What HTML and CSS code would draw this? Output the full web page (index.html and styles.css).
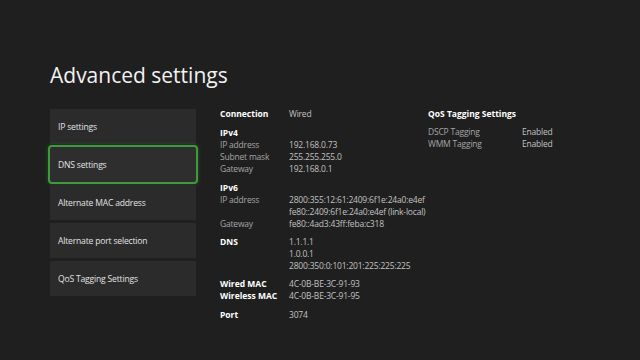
FILE: index.html
```html
<!DOCTYPE html>
<html lang="en">
<head>
    <meta charset="UTF-8">
    <meta name="viewport" content="width=device-width, initial-scale=1.0">
    <title>Advanced settings</title>
    <link rel="stylesheet" href="styles.css">
</head>
<body>
    <div class="page">
        <h1>Advanced settings</h1>
        <div class="content">
            <ul class="menu">
                <li class="menu-item">IP settings</li>
                <li class="menu-item active">DNS settings</li>
                <li class="menu-item">Alternate MAC address</li>
                <li class="menu-item">Alternate port selection</li>
                <li class="menu-item">QoS Tagging Settings</li>
            </ul>

            <div class="details">
                <div class="group">
                    <div class="row"><span class="key head">Connection</span><span class="val">Wired</span></div>
                </div>
                <div class="group">
                    <div class="row title"><span class="key head">IPv4</span></div>
                    <div class="row"><span class="key">IP address</span><span class="val">192.168.0.73</span></div>
                    <div class="row"><span class="key">Subnet mask</span><span class="val">255.255.255.0</span></div>
                    <div class="row"><span class="key">Gateway</span><span class="val">192.168.0.1</span></div>
                </div>
                <div class="group">
                    <div class="row title"><span class="key head">IPv6</span></div>
                    <div class="row"><span class="key">IP address</span><span class="val">2800:355:12:61:2409:6f1e:24a0:e4ef</span></div>
                    <div class="row"><span class="key"></span><span class="val">fe80::2409:6f1e:24a0:e4ef (link-local)</span></div>
                    <div class="row"><span class="key">Gateway</span><span class="val">fe80::4ad3:43ff:feba:c318</span></div>
                </div>
                <div class="group">
                    <div class="row"><span class="key head">DNS</span><span class="val">1.1.1.1</span></div>
                    <div class="row"><span class="key"></span><span class="val">1.0.0.1</span></div>
                    <div class="row"><span class="key"></span><span class="val">2800:350:0:101:201:225:225:225</span></div>
                </div>
                <div class="group wide-gap">
                    <div class="row"><span class="key head">Wired MAC</span><span class="val">4C-0B-BE-3C-91-93</span></div>
                    <div class="row"><span class="key head">Wireless MAC</span><span class="val">4C-0B-BE-3C-91-95</span></div>
                </div>
                <div class="group">
                    <div class="row"><span class="key head">Port</span><span class="val">3074</span></div>
                </div>
            </div>

            <div class="qos">
                <div class="group">
                    <div class="row"><span class="key head">QoS Tagging Settings</span></div>
                </div>
                <div class="group">
                    <div class="row"><span class="key wide">DSCP Tagging</span><span class="val">Enabled</span></div>
                    <div class="row"><span class="key wide">WMM Tagging</span><span class="val">Enabled</span></div>
                </div>
            </div>
        </div>
    </div>
</body>
</html>
```

FILE: styles.css
```css
body {
    margin: 0;
    background-color: #1f1f1f;
    font-family: "Open Sans", "Noto Sans", sans-serif;
    color: #e6e6e6;
    width: 640px;
    height: 360px;
    overflow: hidden;
}

.page {
    padding: 61px 0 0 50px;
}

h1 {
    margin: 0;
    font-size: 21px;
    font-weight: 400;
    line-height: 28px;
    color: #f2f2f2;
}

.content {
    display: flex;
    margin-top: 19px;
}

.menu {
    list-style: none;
    margin: 1px 0 0;
    padding: 0;
    width: 146px;
    display: flex;
    flex-direction: column;
    gap: 3px;
}

.menu-item {
    height: 35px;
    display: flex;
    align-items: center;
    padding-left: 8px;
    background-color: #2b2b2b;
    font-size: 8.6px;
    letter-spacing: -0.2px;
    color: #e2e2e2;
}

.menu-item.active {
    background-color: #2e2e2e;
    outline: 2px solid #3f9a3f;
    box-shadow: 0 0 4px 2px rgba(60, 170, 60, 0.35);
    border-radius: 2px;
}

.details {
    margin-left: 24px;
    width: 208px;
}

.group {
    margin-bottom: 6px;
}

.group.wide-gap {
    margin-bottom: 7px;
}

.row {
    display: flex;
    align-items: baseline;
    font-size: 8.5px;
    line-height: 12px;
    letter-spacing: -0.2px;
    white-space: nowrap;
}

.row.title {
    line-height: 13px;
}

.key {
    width: 69px;
    flex-shrink: 0;
    color: #a6a6a6;
}

.key.head {
    color: #ffffff;
    font-weight: 700;
    letter-spacing: 0;
}

.key.wide {
    width: 94px;
}

.val {
    color: #c2c2c2;
}
```
